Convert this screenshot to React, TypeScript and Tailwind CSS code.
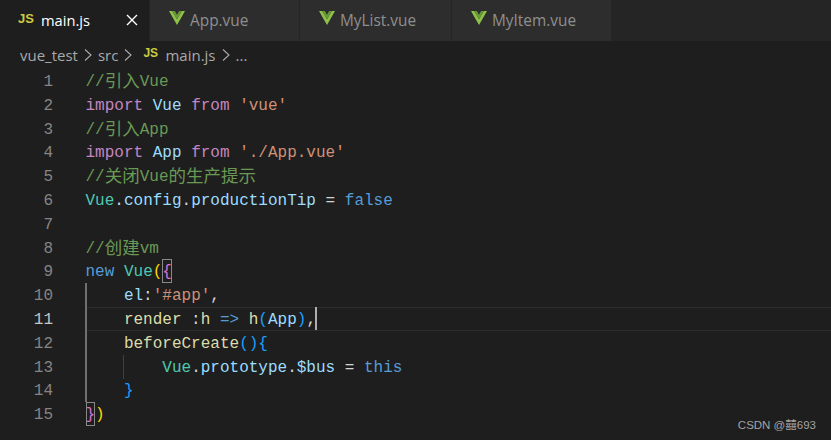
import React from 'react';

const mono = "font-['Liberation_Mono','Noto_Sans_CJK_SC',monospace]";
const ui = "font-['Open_Sans','Noto_Sans',sans-serif]";

type Token = [string, string];

const C = {
  comment: 'text-[#6a9955]',
  cjk: 'text-[#6a9955] text-[17.5px]',
  keyword: 'text-[#c586c0]',
  blue: 'text-[#569cd6]',
  varb: 'text-[#9cdcfe]',
  cls: 'text-[#4ec9b0]',
  str: 'text-[#ce9178]',
  fn: 'text-[#dcdcaa]',
  plain: 'text-[#d4d4d4]',
  gold: 'text-[#ffd700]',
  pink: 'text-[#da70d6]',
  brace: 'text-[#179fff]',
};

const lines: Token[][] = [
  [['//', C.comment], ['引入', C.cjk], ['Vue', C.comment]],
  [['import', C.keyword], [' ', C.plain], ['Vue', C.varb], [' ', C.plain], ['from', C.keyword], [' ', C.plain], ["'vue'", C.str]],
  [['//', C.comment], ['引入', C.cjk], ['App', C.comment]],
  [['import', C.keyword], [' ', C.plain], ['App', C.varb], [' ', C.plain], ['from', C.keyword], [' ', C.plain], ["'./App.vue'", C.str]],
  [['//', C.comment], ['关闭', C.cjk], ['Vue', C.comment], ['的生产提示', C.cjk]],
  [['Vue', C.cls], ['.', C.plain], ['config', C.varb], ['.', C.plain], ['productionTip', C.varb], [' = ', C.plain], ['false', C.blue]],
  [],
  [['//', C.comment], ['创建', C.cjk], ['vm', C.comment]],
  [['new', C.blue], [' ', C.plain], ['Vue', C.cls], ['(', C.gold]],
  [['    ', C.plain], ['el', C.varb], [':', C.plain], ["'#app'", C.str], [',', C.plain]],
  [['    ', C.plain], ['render', C.fn], [' :', C.plain], ['h', C.fn], [' ', C.plain], ['=>', C.blue], [' ', C.plain], ['h', C.fn], ['(', C.brace], ['App', C.varb], [')', C.brace], [',', C.plain]],
  [['    ', C.plain], ['beforeCreate', C.fn], ['(){', C.brace]],
  [['        ', C.plain], ['Vue', C.cls], ['.', C.plain], ['prototype', C.varb], ['.', C.plain], ['$bus', C.varb], [' = ', C.plain], ['this', C.blue]],
  [['    ', C.plain], ['}', C.brace]],
  [],
];

const JsIcon = ({ className }: { className: string }) => (
  <span className={`font-['Liberation_Sans',sans-serif] font-bold text-[#cbcb41] ${className}`}>JS</span>
);

const VueIcon = () => (
  <svg width="16" height="14" viewBox="0 0 16 14" className="shrink-0">
    <polygon points="0,0 3.2,0 8,8.2 12.8,0 16,0 8,14" fill="#8dc149" />
    <polygon points="3.2,0 5.8,0 8,3.8 10.2,0 12.8,0 8,8.2" fill="#6a9a35" />
  </svg>
);

const Chevron = () => (
  <svg width="12" height="14" viewBox="0 0 12 14" className="shrink-0 mx-[4px]">
    <path d="M3 1.5 L9 7 L3 12.5" fill="none" stroke="#a9a9a9" strokeWidth="1.1" />
  </svg>
);

const tabs = [
  { name: 'App.vue', w: 'w-[150px]' },
  { name: 'MyList.vue', w: 'w-[152px]' },
  { name: 'MyItem.vue', w: 'w-[160px]' },
];

export default function App() {
  return (
    <div className="w-[831px] h-[440px] bg-[#1e1e1e] overflow-hidden relative">
      {/* tab bar */}
      <div className={`flex h-[41px] bg-[#252526] text-[15px] ${ui}`}>
        <div className="w-[149px] bg-[#1e1e1e] flex items-center pl-[18px] relative">
          <JsIcon className="text-[13px] w-[23px] -mt-[4px]" />
          <span className="text-white text-[14.7px]">main.js</span>
          <svg width="14" height="14" viewBox="0 0 14 14" className="absolute left-[125px] top-[13px]">
            <path d="M2 2 L12 12 M12 2 L2 12" stroke="#ffffff" strokeWidth="1.4" />
          </svg>
        </div>
        {tabs.map((t) => (
          <div key={t.name} className={`${t.w} bg-[#2d2d2d] border-l border-[#252526] flex items-center gap-[5px] pl-[19px]`}>
            <div className="-mt-[6px]"><VueIcon /></div>
            <span className="text-[#8f8f8f] text-[15.4px]">{t.name}</span>
          </div>
        ))}
      </div>

      {/* breadcrumbs */}
      <div className={`flex items-center h-[28px] pl-[20px] text-[15px] text-[#a9a9a9] ${ui}`}>
        <span>vue_test</span>
        <Chevron />
        <span>src</span>
        <Chevron />
        <JsIcon className="text-[12px] w-[22px] ml-[5px] -mt-[4px]" />
        <span>main.js</span>
        <Chevron />
        <span>...</span>
      </div>

      {/* code */}
      <div className={`relative text-[16px] leading-[26px] whitespace-pre ${mono}`}>
        {lines.map((tokens, i) => {
          const n = i + 1;
          const current = n === 11;
          return (
            <div key={n} className="flex h-[23.8px]">
              <div className={`w-[53px] text-right shrink-0 ${current ? 'text-[#c6c6c6]' : 'text-[#858585]'}`}>{n}</div>
              <div className={`ml-[32.5px] flex-1 flex ${current ? 'shadow-[inset_0_1px_0_#2c2c2c,inset_0_-1px_0_#2c2c2c]' : ''}`}>
                {n === 15 ? (
                  <>
                    <span className="h-[23.8px] text-[#da70d6] outline outline-1 -outline-offset-1 outline-[#888888]">{'}'}</span>
                    <span className="text-[#ffd700]">)</span>
                  </>
                ) : (
                  tokens.map(([t, c], j) => <span key={j} className={c}>{t}</span>)
                )}
                {n === 9 && (
                  <span className="h-[23.8px] text-[#da70d6] outline outline-1 -outline-offset-1 outline-[#888888]">{'{'}</span>
                )}
                {current && <span className="w-[2px] h-[23px] bg-[#aeafad] -ml-[1px]" />}
              </div>
            </div>
          );
        })}
        {/* indent guides */}
        <div className="absolute left-[85px] top-[214px] w-[1.5px] h-[119px] bg-[#707070]" />
        <div className="absolute left-[123px] top-[286px] w-[1px] h-[24px] bg-[#404040]" />
      </div>

      <div className="absolute right-[15px] top-[417px] text-[11.5px] text-[#a3a3a3] font-['Liberation_Sans','Noto_Sans_CJK_SC',sans-serif]">
        CSDN @囍693
      </div>
    </div>
  );
}
